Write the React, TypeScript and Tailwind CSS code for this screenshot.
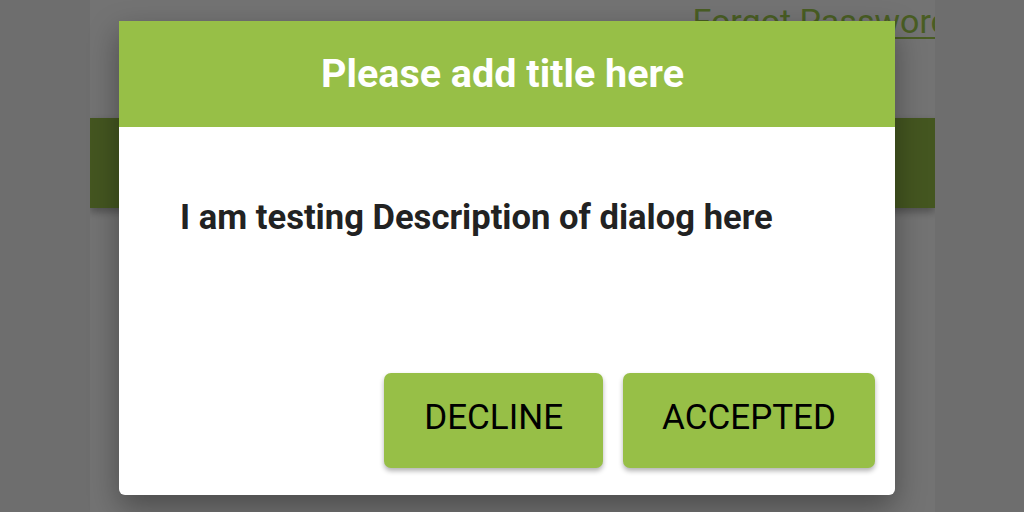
const App = () => {
  return (
    <div className="relative w-[1024px] h-[512px] overflow-hidden bg-[#f4f4f4] font-['Roboto',sans-serif]">
      {/* Page behind the dialog */}
      <div className="mx-auto w-[845px] h-full bg-white overflow-hidden flex flex-col">
        <div className="pl-[603px] pt-[1px] whitespace-nowrap">
          <span className="text-[34px] leading-[40px] text-[#a3cf4f] underline underline-offset-[4px] decoration-[2px]">
            Forgot Password?
          </span>
        </div>
        <div className="mt-[77px] h-[90px] bg-[#97bf47] shadow-[0_4px_8px_rgba(0,0,0,0.3)]" />
      </div>

      {/* Overlay + dialog */}
      <div className="absolute inset-0 bg-black/55 flex items-start">
        <div className="ml-[119px] mt-[21px] w-[776px] h-[474px] bg-white rounded-b-[6px] flex flex-col shadow-[0_12px_30px_rgba(0,0,0,0.35)]">
          <div className="h-[106px] bg-[#97bf47] flex items-center justify-center pr-[9px]">
            <h2 className="text-[39.5px] font-bold text-white leading-none">Please add title here</h2>
          </div>
          <p className="mt-[70px] pl-[61px] text-[34.6px] leading-[40px] font-bold text-[#222222]">
            I am testing Description of dialog here
          </p>
          <div className="mt-auto flex justify-end gap-[20px] pr-[20px] pb-[27px]">
            <button className="h-[95px] px-[40px] pb-[4px] rounded-[7px] bg-[#97bf47] text-[35px] text-black shadow-[0_3px_5px_rgba(0,0,0,0.3)]">
              DECLINE
            </button>
            <button className="h-[95px] px-[39px] pb-[4px] rounded-[7px] bg-[#97bf47] text-[35px] text-black shadow-[0_3px_5px_rgba(0,0,0,0.3)]">
              ACCEPTED
            </button>
          </div>
        </div>
      </div>
    </div>
  );
};

export default App;
